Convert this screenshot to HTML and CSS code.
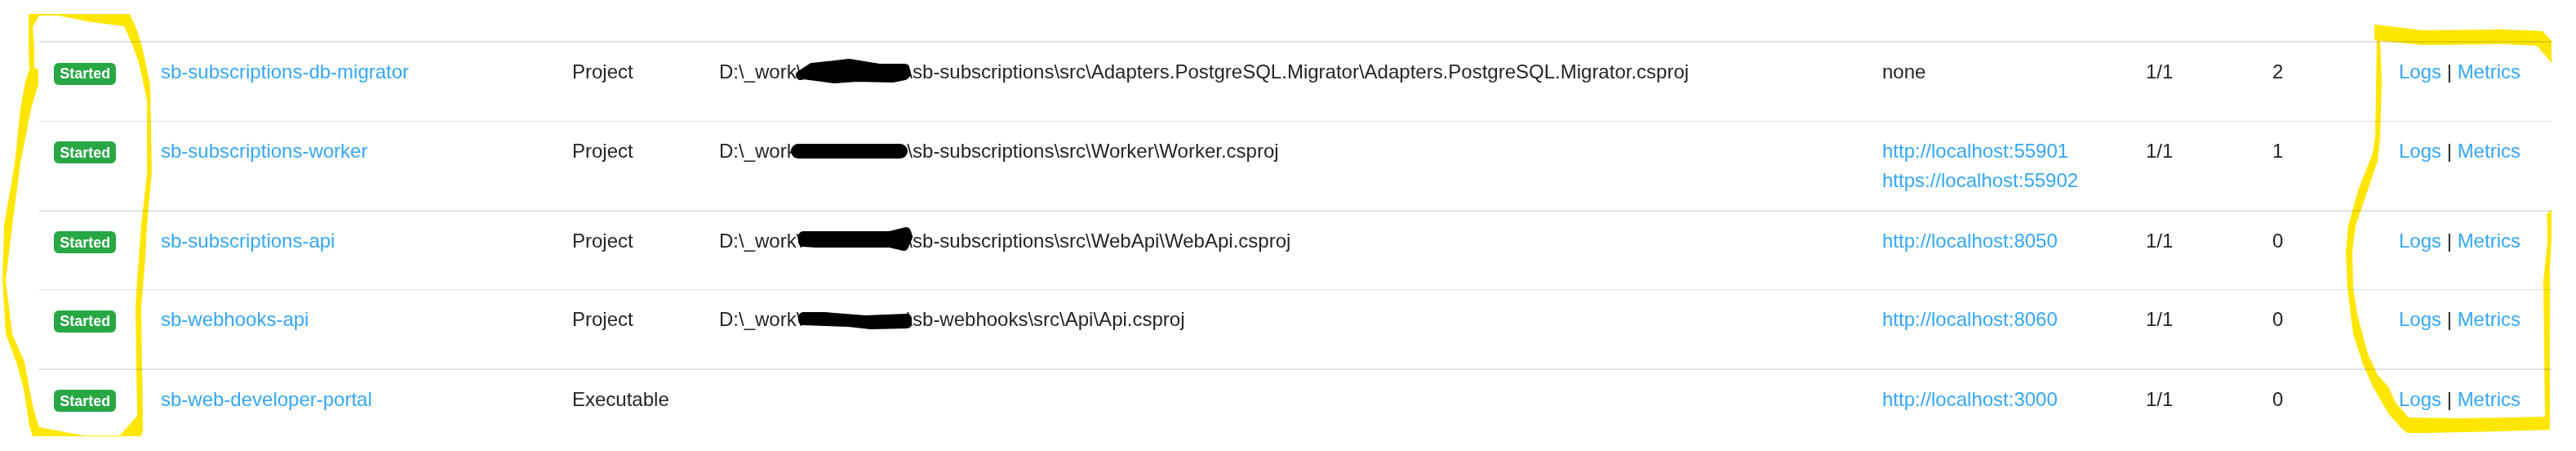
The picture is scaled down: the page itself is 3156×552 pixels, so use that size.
FILE: index.html
```html
<!DOCTYPE html>
<html lang="en">
<head>
<meta charset="utf-8">
<title>Services</title>
<link rel="stylesheet" href="styles.css">
</head>
<body>
<main class="page">
<table class="services">
<colgroup>
<col class="c-state"><col class="c-name"><col class="c-type"><col class="c-source"><col class="c-bind"><col class="c-replicas"><col class="c-restarts"><col class="c-actions">
</colgroup>
<tbody>
<tr class="heavy">
<td><span class="badge">Started</span></td>
<td><a href="#">sb-subscriptions-db-migrator</a></td>
<td>Project</td>
<td>D:\_work\<span class="gap"></span>\sb-subscriptions\src\Adapters.PostgreSQL.Migrator\Adapters.PostgreSQL.Migrator.csproj</td>
<td>none</td>
<td>1/1</td>
<td>2</td>
<td><a href="#">Logs</a> | <a href="#">Metrics</a></td>
</tr>
<tr>
<td><span class="badge">Started</span></td>
<td><a href="#">sb-subscriptions-worker</a></td>
<td>Project</td>
<td>D:\_work\<span class="gap"></span>\sb-subscriptions\src\Worker\Worker.csproj</td>
<td><a href="#">http://localhost:55901</a><br><a href="#">https://localhost:55902</a></td>
<td>1/1</td>
<td>1</td>
<td><a href="#">Logs</a> | <a href="#">Metrics</a></td>
</tr>
<tr class="heavy">
<td><span class="badge">Started</span></td>
<td><a href="#">sb-subscriptions-api</a></td>
<td>Project</td>
<td>D:\_work\<span class="gap"></span>\sb-subscriptions\src\WebApi\WebApi.csproj</td>
<td><a href="#">http://localhost:8050</a></td>
<td>1/1</td>
<td>0</td>
<td><a href="#">Logs</a> | <a href="#">Metrics</a></td>
</tr>
<tr>
<td><span class="badge">Started</span></td>
<td><a href="#">sb-webhooks-api</a></td>
<td>Project</td>
<td>D:\_work\<span class="gap"></span>\sb-webhooks\src\Api\Api.csproj</td>
<td><a href="#">http://localhost:8060</a></td>
<td>1/1</td>
<td>0</td>
<td><a href="#">Logs</a> | <a href="#">Metrics</a></td>
</tr>
<tr class="heavy">
<td><span class="badge">Started</span></td>
<td><a href="#">sb-web-developer-portal</a></td>
<td>Executable</td>
<td></td>
<td><a href="#">http://localhost:3000</a></td>
<td>1/1</td>
<td>0</td>
<td><a href="#">Logs</a> | <a href="#">Metrics</a></td>
</tr>
</tbody>
</table>
</main>
<svg class="markup" width="3156" height="552" viewBox="0 0 3156 552" aria-hidden="true">
<g class="redactions">
<path d="M981 92 L995 83 L1040 78 L1077 84 L1108 84 L1110 90 L1108 92 L1093 95 L1050 94 L1022 96 L985 91 Z"/>
<rect x="969" y="176" width="143" height="18" rx="9"/>
<path d="M984 289 L1090 289 L1110 284 L1112 290 L1107 301 L1090 297 L1000 297 L984 296 Z"/>
<path d="M984 388 L1010 388 L1060 392 L1111 390 L1111 396 L1067 397 L1040 394 L984 392 Z"/>
</g>
<g class="highlights">
<path fill-rule="evenodd" d="M35 17 L159 17 L168 37 L174 57 L184 103 L186 210 L180 276 L178 316 L173 376 L174 443 L175 509 L175 529 L172 534 L40 534 L36 521 L29 476 L20 443 L7 409 L3 343 L5 276 L18 200 L25 133 L31 100 L36 85 L35 57 Z M48 19 L71 19 L112 27 L152 32 L163 57 L171 80 L180 123 L180 213 L173 276 L170 316 L166 376 L167 443 L168 509 L147 533 L103 533 L48 523 L41 500 L36 476 L30 443 L15 409 L7 343 L15 276 L25 200 L38 133 L47 103 L47 85 L42 83 L42 57 L40 33 Z"/>
<path d="M2909 30 L2968 37 L3066 36 L3115 38 L3126 50 L3126 77 L3108 56 L3066 54 L2968 55 L2916 50 L2918 100 L2916 167 L2913 197 L2895 250 L2886 276 L2882 309 L2883 353 L2889 389 L2901 433 L2913 459 L2926 473 L2935 493 L2951 511 L3017 512 L3118 510 L3116 343 L3121 296 L3121 276 L3120 262 L3126 257 L3126 290 L3124 330 L3124 376 L3124 526 L3060 528 L2970 530 L2950 530 L2944 526 L2926 506 L2907 473 L2895 446 L2883 409 L2876 353 L2874 309 L2877 276 L2889 233 L2907 187 L2910 167 L2912 50 L2909 48 Z"/>
</g>
</svg>
</body>
</html>
```
FILE: styles.css
```css
html, body {
  margin: 0;
  background: #fff;
}
body {
  position: relative;
  width: 3156px;
  height: 552px;
  overflow: hidden;
  font-family: "Liberation Sans", Arial, sans-serif;
  font-size: 24px;
  line-height: 36px;
  color: #212529;
}
.page {
  padding: 50px 30px 0 48px;
}
.services {
  width: 3078px;
  table-layout: fixed;
  border-collapse: collapse;
}
.c-state { width: 131px; }
.c-name { width: 504px; }
.c-type { width: 180px; }
.c-source { width: 1425px; }
.c-bind { width: 323px; }
.c-replicas { width: 155px; }
.c-restarts { width: 155px; }
.c-actions { width: 205px; }
.services td {
  height: 97px;
  box-sizing: border-box;
  padding: 18px;
  vertical-align: top;
  border-top: 1px solid #dee2e6;
}
.services .heavy td {
  border-top-width: 2px;
}
.services a {
  color: #35a7f7;
  text-decoration: none;
}
.badge {
  display: inline-block;
  padding: 4.5px 7.2px;
  font-size: 18px;
  font-weight: 700;
  line-height: 1;
  color: #fff;
  background: #28a745;
  border-radius: 6px;
}
.gap {
  display: inline-block;
  width: 129px;
}
.markup {
  position: absolute;
  top: 0;
  left: 0;
  pointer-events: none;
}
.redactions {
  fill: #000;
  stroke: #000;
  stroke-width: 12;
  stroke-linejoin: round;
}
.redactions rect {
  stroke: none;
}
.highlights {
  fill: #ffe600;
  mix-blend-mode: multiply;
}
```
